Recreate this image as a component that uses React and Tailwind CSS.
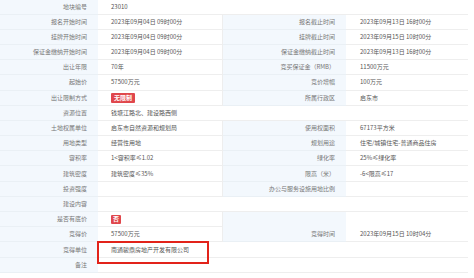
import React from "react";

const L = ({ children, span = "", extra = "" }) => (
  <div
    className={`bg-[#f3f8fd] border-b border-[#eaf0f5] flex items-center justify-end pr-[11px] text-[#777] whitespace-nowrap ${span} ${extra}`}
  >
    {children}
  </div>
);

const V = ({ children, span = "", extra = "" }) => (
  <div
    className={`bg-white border-b border-[#eeeeee] flex items-center pl-[13px] text-[#555] whitespace-nowrap ${span} ${extra}`}
  >
    {children}
  </div>
);

export default function App() {
  return (
    <div
      className="relative w-[474px] h-[278px] bg-white overflow-hidden text-[6px] leading-none"
      style={{ fontFamily: '"Noto Sans CJK SC", "Noto Sans", sans-serif' }}
    >
      <div className="grid grid-cols-[98px_125px_123px_122px] auto-rows-[15.2px] -mt-[0.6px] border-r border-[#eeeeee] w-[468px]">
        <L>地块编号</L>
        <V span="col-span-3">23010</V>

        <L>报名开始时间</L>
        <V extra="border-r border-r-[#eeeeee]">2023年09月04日 09时00分</V>
        <L>报名截止时间</L>
        <V extra="pl-[14px]">2023年09月13日 16时00分</V>

        <L>挂牌开始时间</L>
        <V extra="border-r border-r-[#eeeeee]">2023年09月04日 09时00分</V>
        <L>挂牌截止时间</L>
        <V extra="pl-[14px]">2023年09月15日 10时00分</V>

        <L>保证金缴纳开始时间</L>
        <V extra="border-r border-r-[#eeeeee]">2023年09月04日 09时00分</V>
        <L>保证金缴纳截止时间</L>
        <V extra="pl-[14px]">2023年09月13日 16时00分</V>

        <L>出让年限</L>
        <V extra="border-r border-r-[#eeeeee]">70年</V>
        <L>竞买保证金（RMB）</L>
        <V extra="pl-[14px]">11500万元</V>

        <L>起始价</L>
        <V extra="border-r border-r-[#eeeeee]">57500万元</V>
        <L>竞价增幅</L>
        <V extra="pl-[14px]">100万元</V>

        <L>出让限制方式</L>
        <V extra="border-r border-r-[#eeeeee]">
          <span className="bg-[#e0474c] text-white px-[3px] py-[2px] rounded-[1px] font-bold">无限制</span>
        </V>
        <L>所属行政区</L>
        <V extra="pl-[14px]">启东市</V>

        <L>资源位置</L>
        <V span="col-span-3">钱塘江路北、建设路西侧</V>

        <L>土地权属单位</L>
        <V extra="border-r border-r-[#eeeeee]">启东市自然资源和规划局</V>
        <L>使用权面积</L>
        <V extra="pl-[14px]">67173平方米</V>

        <L>用地类型</L>
        <V extra="border-r border-r-[#eeeeee]">经营性用地</V>
        <L>规划用途</L>
        <V extra="pl-[14px]">住宅/城镇住宅-普通商品住房</V>

        <L>容积率</L>
        <V extra="border-r border-r-[#eeeeee]">1&lt;容积率≤1.02</V>
        <L>绿化率</L>
        <V extra="pl-[14px]">25%≤绿化率</V>

        <L>建筑密度</L>
        <V extra="border-r border-r-[#eeeeee]">建筑密度≤35%</V>
        <L>限高（米）</L>
        <V extra="pl-[14px]">-6&lt;限高≤17</V>

        <L>投资强度</L>
        <V extra="border-r border-r-[#eeeeee]"></V>
        <L>办公与服务设施用地比例</L>
        <V></V>

        <L>建设内容</L>
        <V span="col-span-3"></V>

        <L>是否有底价</L>
        <V extra="border-r border-r-[#eeeeee]">
          <span className="bg-[#e0474c] text-white px-[2px] py-[1.5px] rounded-[1px] font-bold">否</span>
        </V>
        <div className="row-span-2 bg-[#f3f8fd] border-b border-[#eaf0f5] flex flex-col">
          <div className="h-[15.2px]" />
          <div className="h-[15.2px] flex items-center justify-end pr-[11px] text-[#777]">竞得时间</div>
        </div>
        <div className="row-span-2 bg-white border-b border-[#eeeeee] flex flex-col">
          <div className="h-[15.2px]" />
          <div className="h-[15.2px] flex items-center pl-[14px] text-[#555] whitespace-nowrap">2023年09月15日 10时04分</div>
        </div>

        <L>竞得价</L>
        <V extra="border-r border-r-[#eeeeee]">57500万元</V>

        <L>竞得单位</L>
        <V span="col-span-3">南通骏鼎房地产开发有限公司</V>

        <L>备注</L>
        <V span="col-span-3"></V>
      </div>

      <div className="absolute left-[97px] top-[241px] w-[112px] h-[23px] border-2 border-[#e2231a]" />
    </div>
  );
}
